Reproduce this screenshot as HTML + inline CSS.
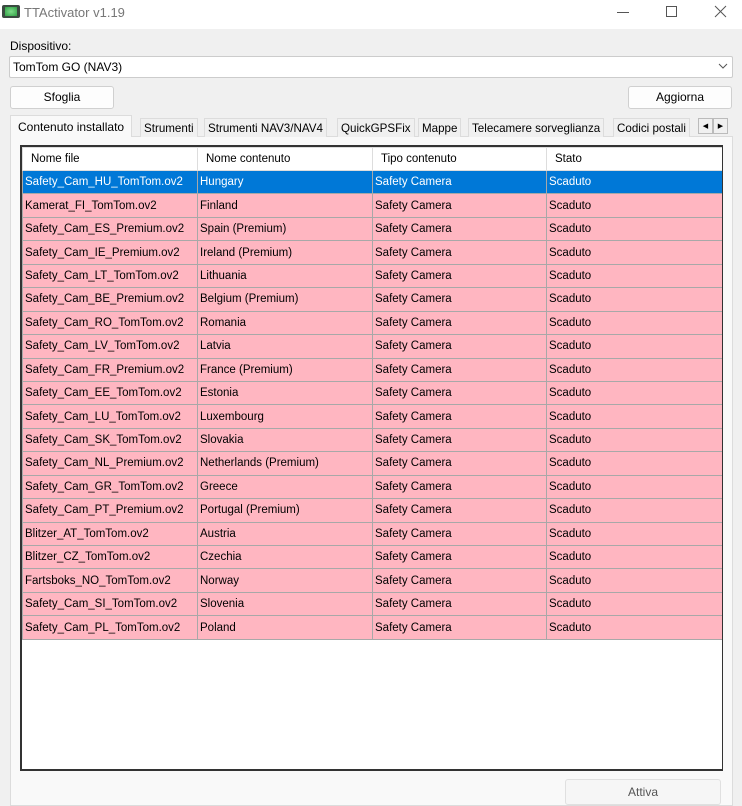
<!DOCTYPE html>
<html><head><meta charset="utf-8"><style>
*{box-sizing:border-box;margin:0;padding:0}
body{width:742px;height:800px;overflow:hidden;background:#f0f0f0;font-family:"Liberation Sans",sans-serif;font-size:12px;color:#000;position:relative}
.abs{position:absolute}
.title{left:0;top:0;width:742px;height:29px;background:#fff}
.btn{background:#fdfdfd;border:1px solid #d0d0d0;border-radius:3px;text-align:center;line-height:21px}
.tab{top:118px;height:19px;line-height:19px;background:#f0f0f0;border:1px solid #dcdcdc;border-bottom:none;padding:0 3px;white-space:nowrap;font-size:11.6px}
table{border-collapse:collapse;table-layout:fixed;width:700px}
td{height:23.45px;border:1px solid #a8a8a8;padding-left:2px;white-space:nowrap;overflow:hidden;font-size:11.5px}
tr.r td{background:#ffb6c1}
tr.s td{background:#0078d7;color:#fff}
tr.h td{background:#fff;padding-left:8px;height:23px;border-color:#ddd}
</style></head><body>
<div class="abs title"></div>
<div class="abs" style="left:2px;top:5px;width:18px;height:13px;background:#3a4a40;border-radius:2px"></div>
<div class="abs" style="left:5px;top:7px;width:12px;height:9px;background:radial-gradient(#7fdc8a,#2fa045)"></div>
<div class="abs" style="left:24px;top:5px;font-size:13px;color:#777">TTActivator v1.19</div>
<div class="abs" style="left:617px;top:12px;width:12px;height:1px;background:#555"></div>
<div class="abs" style="left:666px;top:6px;width:11px;height:11px;border:1px solid #555"></div>
<svg class="abs" style="left:714px;top:5px" width="13" height="13"><path d="M1 1 L12 12 M12 1 L1 12" stroke="#555" stroke-width="1"/></svg>

<div class="abs" style="left:10px;top:39px">Dispositivo:</div>
<div class="abs" style="left:9px;top:56px;width:724px;height:22px;background:#fff;border:1px solid #ccc;border-radius:2px;padding:3px 3px">TomTom GO (NAV3)</div>
<svg class="abs" style="left:718px;top:62px" width="10" height="8"><path d="M1 2 L5 6 L9 2" stroke="#555" fill="none"/></svg>
<div class="abs btn" style="left:10px;top:86px;width:104px;height:23px">Sfoglia</div>
<div class="abs btn" style="left:628px;top:86px;width:104px;height:23px">Aggiorna</div>

<div class="abs" style="left:10px;top:136px;width:723px;height:670px;background:#f9f9f9;border:1px solid #dcdcdc"></div>
<div class="abs tab" style="left:10px;top:115px;height:22px;background:#f9f9f9;padding:0 7px;line-height:22px;border-color:#dcdcdc;z-index:2;font-size:12px">Contenuto installato</div>
<div class="abs tab" style="left:140px">Strumenti</div>
<div class="abs tab" style="left:204px">Strumenti NAV3/NAV4</div>
<div class="abs tab" style="left:337px">QuickGPSFix</div>
<div class="abs tab" style="left:418px">Mappe</div>
<div class="abs tab" style="left:468px">Telecamere sorveglianza</div>
<div class="abs tab" style="left:613px">Codici postali</div>
<div class="abs" style="left:698px;top:118px;width:15px;height:16px;border:1px solid #bbb;background:#f0f0f0;font-size:7px;text-align:center;line-height:15px">◀</div>
<div class="abs" style="left:713px;top:118px;width:15px;height:16px;border:1px solid #bbb;background:#f0f0f0;font-size:7px;text-align:center;line-height:15px">▶</div>

<div class="abs" style="left:20px;top:145px;width:703px;height:626px;background:#fff;border:2px solid #333;border-right-width:1px;overflow:hidden">
<table>
<colgroup><col style="width:175px"><col style="width:175px"><col style="width:174px"><col style="width:176px"></colgroup>
<tr class="h"><td>Nome file</td><td>Nome contenuto</td><td>Tipo contenuto</td><td>Stato</td></tr>
<tr class="s"><td>Safety_Cam_HU_TomTom.ov2</td><td>Hungary</td><td>Safety Camera</td><td>Scaduto</td></tr>
<tr class="r"><td>Kamerat_FI_TomTom.ov2</td><td>Finland</td><td>Safety Camera</td><td>Scaduto</td></tr>
<tr class="r"><td>Safety_Cam_ES_Premium.ov2</td><td>Spain (Premium)</td><td>Safety Camera</td><td>Scaduto</td></tr>
<tr class="r"><td>Safety_Cam_IE_Premium.ov2</td><td>Ireland (Premium)</td><td>Safety Camera</td><td>Scaduto</td></tr>
<tr class="r"><td>Safety_Cam_LT_TomTom.ov2</td><td>Lithuania</td><td>Safety Camera</td><td>Scaduto</td></tr>
<tr class="r"><td>Safety_Cam_BE_Premium.ov2</td><td>Belgium (Premium)</td><td>Safety Camera</td><td>Scaduto</td></tr>
<tr class="r"><td>Safety_Cam_RO_TomTom.ov2</td><td>Romania</td><td>Safety Camera</td><td>Scaduto</td></tr>
<tr class="r"><td>Safety_Cam_LV_TomTom.ov2</td><td>Latvia</td><td>Safety Camera</td><td>Scaduto</td></tr>
<tr class="r"><td>Safety_Cam_FR_Premium.ov2</td><td>France (Premium)</td><td>Safety Camera</td><td>Scaduto</td></tr>
<tr class="r"><td>Safety_Cam_EE_TomTom.ov2</td><td>Estonia</td><td>Safety Camera</td><td>Scaduto</td></tr>
<tr class="r"><td>Safety_Cam_LU_TomTom.ov2</td><td>Luxembourg</td><td>Safety Camera</td><td>Scaduto</td></tr>
<tr class="r"><td>Safety_Cam_SK_TomTom.ov2</td><td>Slovakia</td><td>Safety Camera</td><td>Scaduto</td></tr>
<tr class="r"><td>Safety_Cam_NL_Premium.ov2</td><td>Netherlands (Premium)</td><td>Safety Camera</td><td>Scaduto</td></tr>
<tr class="r"><td>Safety_Cam_GR_TomTom.ov2</td><td>Greece</td><td>Safety Camera</td><td>Scaduto</td></tr>
<tr class="r"><td>Safety_Cam_PT_Premium.ov2</td><td>Portugal (Premium)</td><td>Safety Camera</td><td>Scaduto</td></tr>
<tr class="r"><td>Blitzer_AT_TomTom.ov2</td><td>Austria</td><td>Safety Camera</td><td>Scaduto</td></tr>
<tr class="r"><td>Blitzer_CZ_TomTom.ov2</td><td>Czechia</td><td>Safety Camera</td><td>Scaduto</td></tr>
<tr class="r"><td>Fartsboks_NO_TomTom.ov2</td><td>Norway</td><td>Safety Camera</td><td>Scaduto</td></tr>
<tr class="r"><td>Safety_Cam_SI_TomTom.ov2</td><td>Slovenia</td><td>Safety Camera</td><td>Scaduto</td></tr>
<tr class="r"><td>Safety_Cam_PL_TomTom.ov2</td><td>Poland</td><td>Safety Camera</td><td>Scaduto</td></tr>
</table>
</div>
<div class="abs btn" style="left:565px;top:779px;width:156px;height:26px;line-height:24px;color:#555;background:#f6f6f6;border-color:#e0e0e0">Attiva</div>
</body></html>
